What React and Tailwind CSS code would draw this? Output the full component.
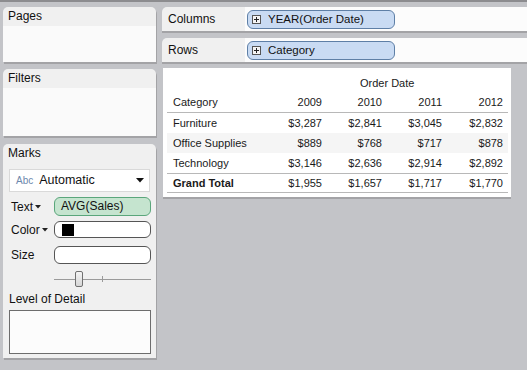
import React from 'react';

const font = { fontFamily: '"Liberation Sans", Arial, sans-serif' };

const rows = [
  { name: 'Furniture', vals: ['$3,287', '$2,841', '$3,045', '$2,832'] },
  { name: 'Office Supplies', vals: ['$889', '$768', '$717', '$878'], stripe: true },
  { name: 'Technology', vals: ['$3,146', '$2,636', '$2,914', '$2,892'] },
];

const Panel = ({ title, className = '', children }) => (
  <div className={`flex flex-col rounded-t-[5px] overflow-hidden shadow-[1px_2px_0_#a3a3a6] ${className}`}>
    <div className="h-[19px] shrink-0 bg-[#f0f0f0] pl-[5px] text-[12px] leading-[19px] text-[#111]">{title}</div>
    <div className="flex-1 bg-[#fafafa]">{children}</div>
  </div>
);

const PlusBox = () => (
  <span className="w-[9px] h-[9px] border border-[#555] bg-[#f4f4f4] flex items-center justify-center shrink-0">
    <svg width="7" height="7" viewBox="0 0 7 7">
      <path d="M1 3.5h5M3.5 1v5" stroke="#222" strokeWidth="1" />
    </svg>
  </span>
);

const Shelf = ({ label, pill }) => (
  <div className="flex h-[24px] rounded-tl-[5px] overflow-hidden shadow-[0_2px_0_#a3a3a6]">
    <div className="w-[83px] shrink-0 bg-[#f0f0f0] pl-[6px] text-[12px] leading-[25px] text-[#111]">{label}</div>
    <div className="flex-1 bg-[#fcfcfc] pl-[2px] pt-[3px]">
      <div className="w-[148px] h-[19px] rounded-[6px] border border-[#5e7fa6] bg-[#c9dbf3] flex items-center gap-[7px] pl-[4px] text-[11.5px] text-[#111]">
        <PlusBox />
        <span>{pill}</span>
      </div>
    </div>
  </div>
);

const Caret = () => (
  <svg width="6" height="4" viewBox="0 0 6 4" className="ml-[2px]">
    <path d="M0 0h6L3 3.5z" fill="#222" />
  </svg>
);

export default function App() {
  return (
    <div className="w-[527px] h-[370px] overflow-hidden bg-[#c3c4c8] border-t-2 border-[#8c8c8f] flex" style={font}>
      {/* left side: pages / filters / marks */}
      <div className="ml-[3px] mt-[5px] w-[153px] shrink-0 flex flex-col">
        <Panel title="Pages" className="h-[55px]" />
        <Panel title="Filters" className="h-[67px] mt-[7px]" />
        <div className="h-[214px] mt-[8px] rounded-t-[5px] bg-[#f0f0f0] shadow-[1px_2px_0_#a3a3a6] flex flex-col">
          <div className="h-[19px] pl-[5px] text-[12px] leading-[19px] text-[#111]">Marks</div>
          <div className="mt-[6px] ml-[6px] w-[141px] h-[23px] bg-white border border-[#d9d9d9] flex items-center pl-[6px] pr-[5px]">
            <span className="text-[10px] text-[#6d88ad]">Abc</span>
            <span className="ml-[6px] text-[12.5px] text-[#111]">Automatic</span>
            <svg width="8" height="5" viewBox="0 0 8 5" className="ml-auto">
              <path d="M0 0h8L4 4.5z" fill="#111" />
            </svg>
          </div>
          <div className="mt-[5px] flex items-center h-[19px]">
            <div className="w-[51px] pl-[8px] flex items-center text-[12px] text-[#111]">Text<Caret /></div>
            <div className="w-[97px] h-[19px] rounded-[6px] border border-[#5aa67b] bg-[#c5e4cf] pl-[6px] text-[12px] leading-[17px] text-[#111]">AVG(Sales)</div>
          </div>
          <div className="mt-[5px] flex items-center h-[17px]">
            <div className="w-[51px] pl-[8px] flex items-center text-[12px] text-[#111]">Color<Caret /></div>
            <div className="w-[97px] h-[17px] rounded-[6px] border border-[#555] bg-white flex items-center pl-[7px]">
              <span className="w-[12px] h-[12px] bg-black" />
            </div>
          </div>
          <div className="mt-[8px] flex items-center h-[18px]">
            <div className="w-[51px] pl-[8px] text-[12px] text-[#111]">Size</div>
            <div className="w-[97px] h-[18px] rounded-[6px] border border-[#555] bg-white" />
          </div>
          <div className="mt-[7px] ml-[51px] w-[97px] h-[16px] relative flex items-center">
            <div className="w-full h-px bg-[#9a9a9a]" />
            <div className="absolute left-[48px] top-[5px] w-px h-[6px] bg-[#9a9a9a]" />
            <div className="absolute left-[21px] top-0 w-[8px] h-[16px] rounded-[2px] border border-[#707070] bg-gradient-to-b from-[#f4f4f4] to-[#d6d6d6]" />
          </div>
          <div className="mt-[5px] pl-[6px] text-[12px] leading-[15px] text-[#111]">Level of Detail</div>
          <div className="mt-[3px] ml-[6px] w-[142px] h-[44px] border border-[#6d6d6d] bg-[#fcfcfc]" />
        </div>
      </div>

      {/* right side: shelves + view */}
      <div className="ml-[6px] mt-[5px] flex-1 flex flex-col">
        <Shelf label="Columns" pill="YEAR(Order Date)" />
        <div className="mt-[7px]">
          <Shelf label="Rows" pill="Category" />
        </div>
        <div className="mt-[6px] ml-px w-[348px] h-[129px] bg-white shadow-[0_2px_0_#a3a3a6] pt-[5px] pl-[4px] text-[11px] text-[#1a1a1a]">
          <div className="w-[341px]">
            <div className="h-[20px] leading-[20px] pl-[193px]">Order Date</div>
            <div className="h-[20px] grid grid-cols-[89px_60px_60px_60px_61px] items-center pl-[6px] pr-[5px] border-b border-[#b8b8b8]">
              <span>Category</span>
              {['2009', '2010', '2011', '2012'].map((y) => (
                <span key={y} className="text-right">{y}</span>
              ))}
            </div>
            {rows.map((r) => (
              <div
                key={r.name}
                className={`h-[20px] grid grid-cols-[89px_60px_60px_60px_61px] items-center pl-[6px] pr-[5px] ${r.stripe ? 'bg-[#f5f5f5]' : ''}`}
              >
                <span>{r.name}</span>
                {r.vals.map((v, i) => (
                  <span key={i} className="text-right">{v}</span>
                ))}
              </div>
            ))}
            <div className="h-[20px] grid grid-cols-[89px_60px_60px_60px_61px] items-center pl-[6px] pr-[5px] border-y border-[#b8b8b8]">
              <span className="font-bold">Grand Total</span>
              {['$1,955', '$1,657', '$1,717', '$1,770'].map((v) => (
                <span key={v} className="text-right">{v}</span>
              ))}
            </div>
          </div>
        </div>
      </div>
    </div>
  );
}
